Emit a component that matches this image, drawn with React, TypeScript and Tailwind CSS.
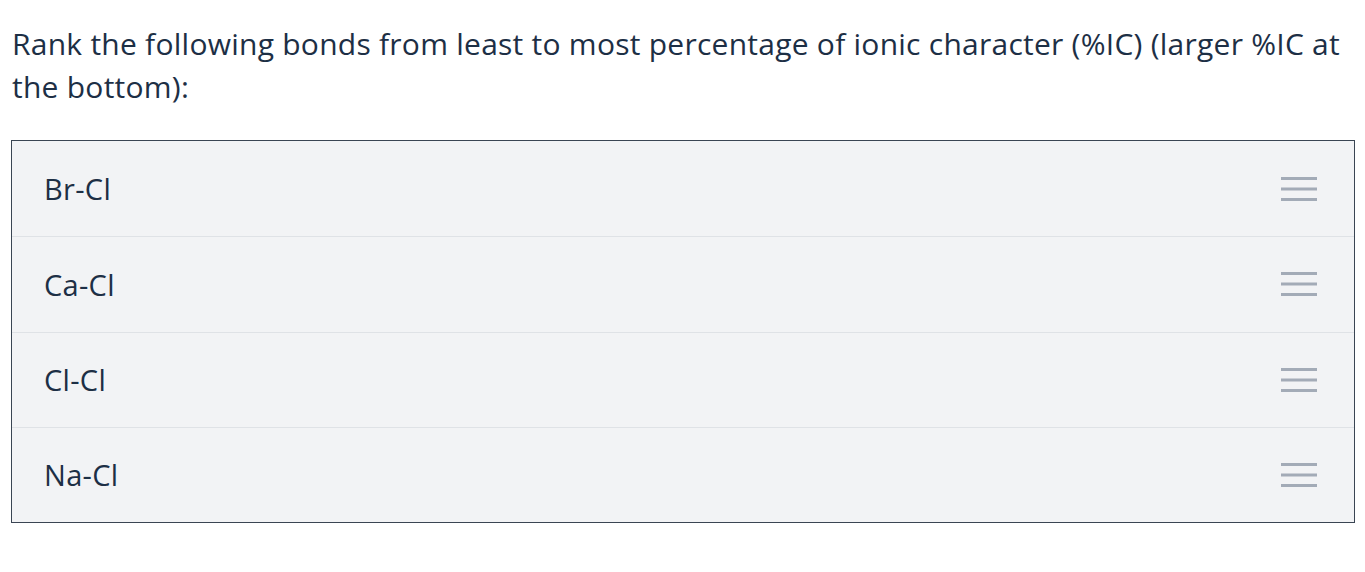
const items = ["Br-Cl", "Ca-Cl", "Cl-Cl", "Na-Cl"];

function DragHandle() {
  return (
    <svg width="36" height="26" viewBox="0 0 36 26" className="shrink-0">
      <rect x="0" y="1" width="36" height="3" fill="#a3abb7" />
      <rect x="0" y="11.5" width="36" height="3" fill="#a3abb7" />
      <rect x="0" y="22" width="36" height="3" fill="#a3abb7" />
    </svg>
  );
}

export default function App() {
  return (
    <div className="min-h-screen bg-white pl-[11px] pr-[11px] pt-[22px] font-['Open_Sans','Liberation_Sans',sans-serif] text-[#1d2f45]">
      <p className="pl-px text-[30px] leading-[43px] tracking-[0.25px]">
        Rank the following bonds from least to most percentage of ionic character (%IC) (larger %IC at the bottom):
      </p>
      <ul className="mt-[32px] w-[1344px] border border-[#3a4553] bg-[#f2f3f5]">
        {items.map((label, i) => (
          <li
            key={label}
            className={`flex h-[95.25px] items-center justify-between pl-[32px] pr-[37px] ${
              i > 0 ? "border-t border-[#dfe2e6]" : ""
            }`}
          >
            <span className="text-[29px] tracking-[0.3px]">{label}</span>
            <DragHandle />
          </li>
        ))}
      </ul>
    </div>
  );
}
